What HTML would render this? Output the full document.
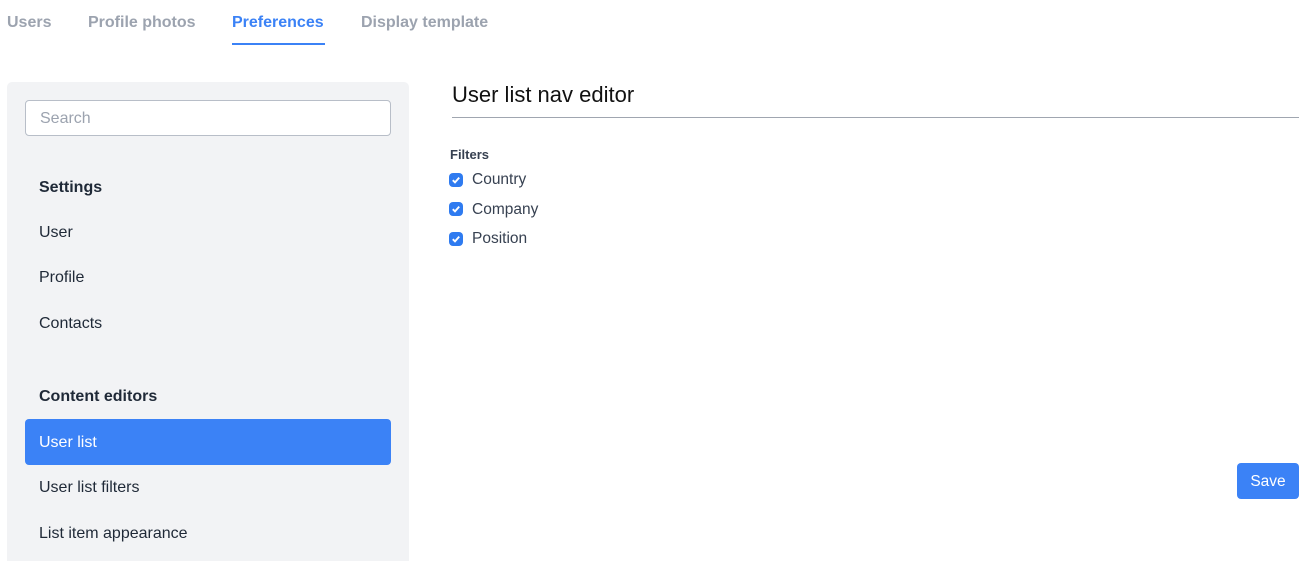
<!DOCTYPE html>
<html><head><style>
*{box-sizing:border-box;margin:0;padding:0}
html,body{width:1312px;height:561px;overflow:hidden}
body{background:#fff;font-family:"Liberation Sans",sans-serif;color:#1f2937;position:relative}
.a{position:absolute;white-space:nowrap}
.tab{font-size:16px;font-weight:bold;color:#9ca3af;top:14px}
.side{left:7px;top:82px;width:402px;height:479px;background:#f2f3f5;border-radius:5px 5px 0 0}
.it{left:39px;font-size:16px;color:#1f2937}
.b{font-weight:bold}
.cb{position:absolute;left:449px;width:14px;height:14px;background:#2f7bf0;border-radius:4px}
.cb svg{position:absolute;left:1px;top:1px}
.lab{left:472px;font-size:15.5px;color:#374151}
</style></head><body>
<div class="a tab" style="left:7px">Users</div>
<div class="a tab" style="left:88px">Profile photos</div>
<div class="a tab" style="left:232px;color:#3b82f6">Preferences</div>
<div class="a" style="left:232px;top:43px;width:93px;height:2px;background:#3b82f6"></div>
<div class="a tab" style="left:361px">Display template</div>

<div class="a side"></div>
<div class="a" style="left:25px;top:100px;width:366px;height:36px;background:#fff;border:1px solid #b8bec8;border-radius:4px;padding:9px 14px;font-size:16px;color:#9ca3af">Search</div>
<div class="a it b" style="top:179px">Settings</div>
<div class="a it" style="top:224px">User</div>
<div class="a it" style="top:269px">Profile</div>
<div class="a it" style="top:315px">Contacts</div>
<div class="a it b" style="top:388px">Content editors</div>
<div class="a" style="left:25px;top:419px;width:366px;height:46px;background:#3b82f6;border-radius:4px"></div>
<div class="a it" style="top:434px;color:#fff">User list</div>
<div class="a it" style="top:479px">User list filters</div>
<div class="a it" style="top:525px">List item appearance</div>

<div class="a" style="left:452px;top:82px;font-size:22px;color:#111">User list nav editor</div>
<div class="a" style="left:452px;top:117px;width:847px;height:1px;background:#a0a6b0"></div>
<div class="a" style="left:450px;top:147px;font-size:13px;font-weight:bold;color:#374151">Filters</div>
<div class="cb" style="top:173px"><svg width="12" height="12" viewBox="0 0 12 12"><path d="M2.8 6.2l2.2 2.2 4.2-4.8" stroke="#fff" stroke-width="1.9" fill="none"/></svg></div>
<div class="cb" style="top:202px"><svg width="12" height="12" viewBox="0 0 12 12"><path d="M2.8 6.2l2.2 2.2 4.2-4.8" stroke="#fff" stroke-width="1.9" fill="none"/></svg></div>
<div class="cb" style="top:232px"><svg width="12" height="12" viewBox="0 0 12 12"><path d="M2.8 6.2l2.2 2.2 4.2-4.8" stroke="#fff" stroke-width="1.9" fill="none"/></svg></div>
<div class="a lab" style="top:171px">Country</div>
<div class="a lab" style="top:201px">Company</div>
<div class="a lab" style="top:230px">Position</div>

<div class="a" style="left:1237px;top:463px;width:62px;height:36px;background:#3b82f6;border-radius:4px;color:#fff;font-size:15.5px;text-align:center;line-height:38px">Save</div>
</body></html>
